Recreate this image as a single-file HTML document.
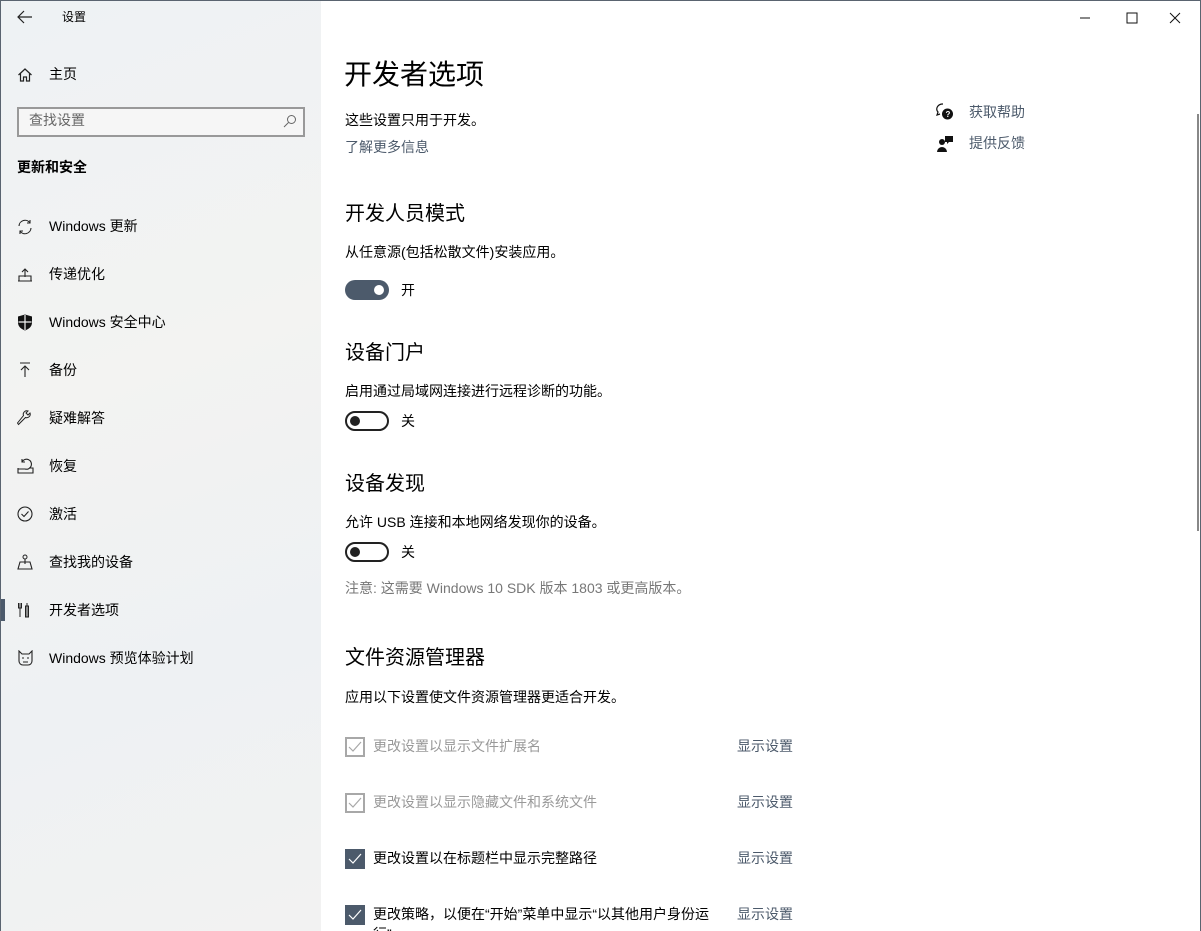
<!DOCTYPE html>
<html><head><meta charset="utf-8"><style>
*{margin:0;padding:0;box-sizing:border-box}
html,body{width:1201px;height:931px;overflow:hidden}
body{font-family:"Liberation Sans","Noto Sans CJK SC",sans-serif;font-size:14px;color:#000;background:#fff;position:relative}
.side{position:absolute;left:0;top:0;width:321px;height:931px;background:linear-gradient(160deg,#eef2f4 0%,#f3f3f2 40%,#eef1f3 70%,#f2f2f2 100%);border-left:1px solid #5a6470;border-top:1px solid #5a6470;overflow:hidden}
.main{position:absolute;left:321px;top:0;right:0;height:931px;border-top:1px solid #5a6470;border-right:1px solid #5a6470;overflow:hidden}
.a{position:absolute;white-space:nowrap}
div.t{margin-top:-2px}
.nav{position:absolute;left:48px;font-size:14px;margin-top:-2px}
.ic{position:absolute;left:16px}
.link{color:#4c5a6b}
h2{position:absolute;left:24px;font-size:20px;font-weight:normal;white-space:nowrap;margin-top:-2px}
.tg{position:absolute;left:24px;width:44px;height:20px;border-radius:10px}
.on{background:#4c5a6b}
.on::after{content:"";position:absolute;right:5px;top:5px;width:10px;height:10px;border-radius:50%;background:#fff}
.off{border:2px solid #222}
.off::after{content:"";position:absolute;left:3px;top:3px;width:10px;height:10px;border-radius:50%;background:#222}
.cb{position:absolute;left:24px;width:20px;height:20px}
.cbd{border:2px solid #a8a8a8}
.cbo{background:#4c5a6b}
</style></head><body>
<div class="side">
<svg class="a" style="left:16px;top:9px" width="16" height="14" viewBox="0 0 16 14"><path d="M7 1L1 7l6 6M1 7h14" fill="none" stroke="#222" stroke-width="1.2"/></svg>
<div class="a t" style="left:61px;top:9px;font-size:12px">设置</div>
<svg class="ic" style="top:66px" width="16" height="16" viewBox="0 0 16 16"><path d="M1.5 8L8 2l6.5 6M3.5 6.5V14h3v-4h3v4h3V6.5" fill="none" stroke="#222" stroke-width="1.2"/></svg>
<div class="nav" style="top:65px">主页</div>
<div class="a" style="left:16px;top:106px;width:288px;height:30px;border:2px solid #999;background:#f6f6f6"></div>
<div class="a t" style="left:28px;top:111px;color:#666">查找设置</div>
<svg class="a" style="left:282px;top:113px" width="14" height="14" viewBox="0 0 14 14"><circle cx="8.5" cy="5.5" r="4" fill="none" stroke="#666"/><path d="M5.5 8.5L1 13" stroke="#666"/></svg>
<div class="a t" style="left:16px;top:158px;font-weight:bold">更新和安全</div>
<svg class="ic" style="top:218px" width="16" height="16" viewBox="0 0 16 16"><path d="M2 7a6 6 0 0 1 11-3M14 9a6 6 0 0 1-11 3M13 1v3h-3M3 15v-3h3" fill="none" stroke="#222" stroke-width="1.1"/></svg>
<div class="nav" style="top:217px">Windows 更新</div>
<svg class="ic" style="top:266px" width="16" height="16" viewBox="0 0 16 16"><path d="M1 14h14M2 14V9h12v5M8 2v8M5 5l3-3 3 3" fill="none" stroke="#222" stroke-width="1.1"/></svg>
<div class="nav" style="top:265px">传递优化</div>
<svg class="ic" style="top:313px" width="16" height="17" viewBox="0 0 16 17"><path d="M8 0.5L1 2.5v6c0 4 3 6.5 7 8 4-1.5 7-4 7-8v-6z" fill="#111"/><path d="M8 1v15M1.5 8h13" stroke="#f2f2f2" stroke-width="1.2"/></svg>
<div class="nav" style="top:313px">Windows 安全中心</div>
<svg class="ic" style="top:361px" width="16" height="16" viewBox="0 0 16 16"><path d="M3 1h10M8 15V4M4 8l4-4 4 4" fill="none" stroke="#222" stroke-width="1.1"/></svg>
<div class="nav" style="top:361px">备份</div>
<svg class="ic" style="top:409px" width="16" height="16" viewBox="0 0 16 16"><path d="M1.5 14.5l7-7a3.5 3.5 0 0 0 4.5-4.5l-2 2-2-2 2-2A3.5 3.5 0 0 0 6.5 5.5l-6 7.5z" fill="none" stroke="#222" stroke-width="1"/></svg>
<div class="nav" style="top:409px">疑难解答</div>
<svg class="ic" style="top:457px" width="17" height="16" viewBox="0 0 17 16"><path d="M1 10v5h15v-5h-4M5 4a5 5 0 1 1 3 7H1M5 1v3h3" fill="none" stroke="#222" stroke-width="1.1"/></svg>
<div class="nav" style="top:457px">恢复</div>
<svg class="ic" style="top:505px" width="16" height="16" viewBox="0 0 16 16"><circle cx="8" cy="8" r="7" fill="none" stroke="#222" stroke-width="1.1"/><path d="M4.5 8l2.5 2.5 4.5-5" fill="none" stroke="#222" stroke-width="1.1"/></svg>
<div class="nav" style="top:505px">激活</div>
<svg class="ic" style="top:553px" width="16" height="16" viewBox="0 0 16 16"><circle cx="8" cy="3" r="2" fill="none" stroke="#222"/><path d="M8 5v5M1 15h14l-2-7H3z" fill="none" stroke="#222" stroke-width="1.1"/></svg>
<div class="nav" style="top:553px">查找我的设备</div>
<div class="a" style="left:0;top:598px;width:4px;height:22px;background:#4c5a6b"></div>
<svg class="ic" style="top:601px" width="14" height="16" viewBox="0 0 14 16"><path d="M3 1v14M1.5 1v5h3V1M10 1v14M8.5 4h3v11h-3z" fill="none" stroke="#222" stroke-width="1"/></svg>
<div class="nav" style="top:601px">开发者选项</div>
<svg class="ic" style="top:649px" width="17" height="16" viewBox="0 0 17 16"><path d="M2 1l3 3h7l3-3v10a4 4 0 0 1-4 4H6a4 4 0 0 1-4-4zM5 8h2M10 8h2M6 12h5" fill="none" stroke="#222" stroke-width="1.1"/></svg>
<div class="nav" style="top:649px">Windows 预览体验计划</div>
</div>
<div class="main">
<svg class="a" style="left:758px;top:11px" width="12" height="12"><path d="M1 6h10" stroke="#111"/></svg>
<svg class="a" style="left:805px;top:11px" width="12" height="12"><rect x="1" y="1" width="10" height="10" fill="none" stroke="#111"/></svg>
<svg class="a" style="left:848px;top:11px" width="12" height="12"><path d="M1 1l10 10M11 1L1 11" stroke="#111"/></svg>
<div class="a" style="left:876px;top:113px;width:2px;height:417px;background:#888"></div>
<div class="a t" style="left:23px;top:54px;font-size:28px">开发者选项</div>
<div class="a t" style="left:24px;top:111px">这些设置只用于开发。</div>
<div class="a t link" style="left:24px;top:138px">了解更多信息</div>
<svg class="a" style="left:615px;top:102px" width="18" height="18" viewBox="0 0 18 18"><path d="M7 1a6 5 0 0 0-5 8l-1 3 3-1" fill="none" stroke="#111" stroke-width="1.2"/><circle cx="11.5" cy="11" r="5.5" fill="#111"/><text x="9.5" y="14" font-size="8" fill="#fff" font-family="Liberation Sans" font-weight="bold">?</text></svg>
<div class="a t link" style="left:648px;top:103px">获取帮助</div>
<svg class="a" style="left:615px;top:134px" width="18" height="18" viewBox="0 0 18 18"><circle cx="6" cy="7" r="3" fill="#111"/><path d="M1 17a5 5 0 0 1 10 0z" fill="#111"/><path d="M9 1h8v6h-4l-2 2V7H9z" fill="#111"/></svg>
<div class="a t link" style="left:648px;top:134px">提供反馈</div>
<h2 style="top:198px">开发人员模式</h2>
<div class="a t" style="left:24px;top:243px">从任意源(包括松散文件)安装应用。</div>
<div class="tg on" style="top:279px"></div><div class="a t" style="left:80px;top:281px">开</div>
<h2 style="top:337px">设备门户</h2>
<div class="a t" style="left:24px;top:382px">启用通过局域网连接进行远程诊断的功能。</div>
<div class="tg off" style="top:410px"></div><div class="a t" style="left:80px;top:412px">关</div>
<h2 style="top:468px">设备发现</h2>
<div class="a t" style="left:24px;top:513px">允许 USB 连接和本地网络发现你的设备。</div>
<div class="tg off" style="top:541px"></div><div class="a t" style="left:80px;top:543px">关</div>
<div class="a t" style="left:24px;top:579px;color:#777">注意: 这需要 Windows 10 SDK 版本 1803 或更高版本。</div>
<h2 style="top:642px">文件资源管理器</h2>
<div class="a t" style="left:24px;top:688px">应用以下设置使文件资源管理器更适合开发。</div>
<div class="cb cbd" style="top:736px"></div><svg class="a" style="left:27px;top:740px" width="14" height="12"><path d="M1 6l4 4 8-9" fill="none" stroke="#a8a8a8" stroke-width="1.2"/></svg>
<div class="a t" style="left:52px;top:737px;color:#999">更改设置以显示文件扩展名</div><div class="a t link" style="left:416px;top:737px">显示设置</div>
<div class="cb cbd" style="top:792px"></div><svg class="a" style="left:27px;top:796px" width="14" height="12"><path d="M1 6l4 4 8-9" fill="none" stroke="#a8a8a8" stroke-width="1.2"/></svg>
<div class="a t" style="left:52px;top:793px;color:#999">更改设置以显示隐藏文件和系统文件</div><div class="a t link" style="left:416px;top:793px">显示设置</div>
<div class="cb cbo" style="top:848px"></div><svg class="a" style="left:27px;top:852px" width="14" height="12"><path d="M1 6l4 4 8-9" fill="none" stroke="#fff" stroke-width="1.2"/></svg>
<div class="a t" style="left:52px;top:849px">更改设置以在标题栏中显示完整路径</div><div class="a t link" style="left:416px;top:849px">显示设置</div>
<div class="cb cbo" style="top:904px"></div><svg class="a" style="left:27px;top:908px" width="14" height="12"><path d="M1 6l4 4 8-9" fill="none" stroke="#fff" stroke-width="1.2"/></svg>
<div class="a t" style="left:52px;top:905px">更改策略，以便在“开始”菜单中显示“以其他用户身份运</div><div class="a t" style="left:52px;top:925px">行”</div><div class="a t link" style="left:416px;top:905px">显示设置</div>
</div>
</body></html>
